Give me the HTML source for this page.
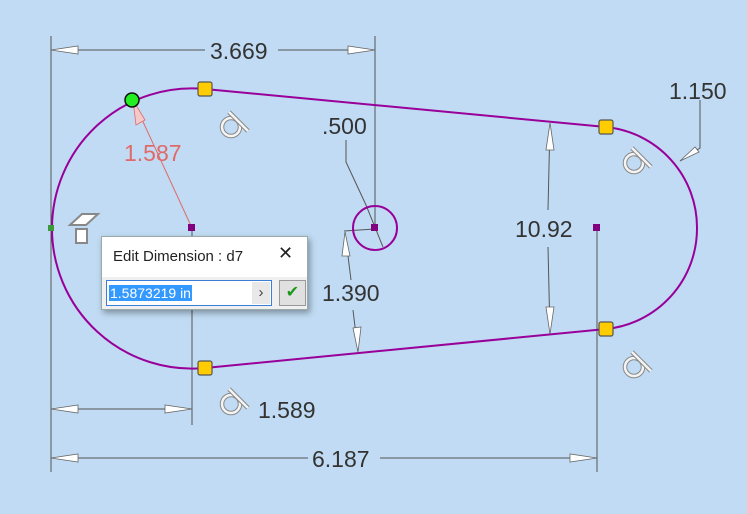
<!DOCTYPE html>
<html><head><style>
body{margin:0;width:747px;height:514px;overflow:hidden;background:#c0dbf3;font-family:"Liberation Sans",sans-serif}
svg{position:absolute;left:0;top:0}
.dlg{position:absolute;left:101px;top:236px;width:205px;height:72px;background:#fff;border:1px solid #9aa;box-shadow:2px 3px 6px rgba(0,0,0,.35)}
.ttl{position:absolute;left:11px;top:11px;font-size:15px;color:#222}
.x{position:absolute;left:176px;top:6px;font-size:18px;color:#222}
.bar{position:absolute;left:0;top:40px;width:205px;height:32px;background:#f0f0f0}
.inp{position:absolute;left:4px;top:43px;width:164px;height:24px;border:1px solid #3a7fd5;background:#fff}
.sel{position:absolute;left:2px;top:4px;background:#3399ff;color:#fff;font-size:14px;padding:0 1px;line-height:16px}
.gt{position:absolute;left:145px;top:1px;width:18px;height:22px;background:#e8e8e8;font-size:15px;color:#444;text-align:center;line-height:22px}
.ok{position:absolute;left:177px;top:43px;width:25px;height:24px;border:1px solid #999;background:#e0e0e0;color:#1a9a1a;font-size:16px;text-align:center;line-height:24px}
</style></head><body>
<svg width="747" height="514" viewBox="0 0 747 514">
<defs>
<g id="tg"><circle cx="0" cy="0" r="9" fill="none" stroke="#888" stroke-width="4.5"/><circle cx="0" cy="0" r="9" fill="none" stroke="#f4f4f4" stroke-width="2.5"/><line x1="-2" y1="-15" x2="17" y2="4" stroke="#888" stroke-width="4.5"/><line x1="-2" y1="-15" x2="17" y2="4" stroke="#f4f4f4" stroke-width="2.5"/></g>
</defs>
<g stroke="#555" stroke-width="1" fill="none">
<line x1="51" y1="36" x2="51" y2="472"/>
<line x1="375" y1="36" x2="375" y2="228"/>
<line x1="597" y1="228" x2="597" y2="472"/>
<line x1="192" y1="228" x2="192" y2="425"/>
<line x1="51" y1="50" x2="205" y2="50"/><line x1="278" y1="50" x2="375" y2="50"/>
<line x1="51" y1="458" x2="308" y2="458"/><line x1="380" y1="458" x2="597" y2="458"/>
<line x1="51" y1="409" x2="192" y2="409"/>
<line x1="550" y1="123" x2="548" y2="210"/><line x1="548" y1="247" x2="550" y2="334"/>
<line x1="344" y1="231" x2="375" y2="229"/>
<line x1="345" y1="232" x2="351" y2="280"/><line x1="353" y1="310" x2="358" y2="352"/>
<polyline points="346,140 346,162 366,205 383,247"/>
<polyline points="700,100 700,148 680,161"/>
</g>
<g fill="#fff" stroke="#666" stroke-width=".8">
<polygon points="51,50 78,46 78,54"/><polygon points="375,50 348,46 348,54"/>
<polygon points="51,458 78,454 78,462"/><polygon points="597,458 570,454 570,462"/>
<polygon points="51,409 78,405 78,413"/><polygon points="192,409 165,405 165,413"/>
<polygon points="550,123 546,150 554,150"/><polygon points="550,334 546,307 554,307"/>
<polygon points="345,232 342,256 350,256"/><polygon points="358,352 353,328 361,327"/>
<polygon points="680,161 695,147 699,152"/>
</g>
<line x1="192" y1="228" x2="133" y2="100" stroke="#e06a6a" stroke-width="1"/>
<polygon points="133,100 136,125 145,120" fill="#f3c9c9" stroke="#e06a6a" stroke-width=".8"/>
<g stroke="#990099" stroke-width="2" fill="none">
<path d="M205,89 A140,140 0 0 0 52,228 A140,140 0 0 0 205,368"/>
<line x1="205" y1="89" x2="606" y2="127"/>
<line x1="205" y1="368" x2="606" y2="329"/>
<path d="M606,127 A101,101 0 0 1 697,228 A101,101 0 0 1 606,329"/>
<circle cx="375" cy="228" r="22"/>
</g>
<g fill="#ffcc00" stroke="#555" stroke-width="1.2">
<rect x="198" y="82" width="14" height="14" rx="2"/><rect x="599" y="120" width="14" height="14" rx="2"/>
<rect x="599" y="322" width="14" height="14" rx="2"/><rect x="198" y="361" width="14" height="14" rx="2"/>
</g>
<circle cx="132" cy="100" r="7" fill="#22ee22" stroke="#111" stroke-width="1.5"/>
<rect x="188" y="224" width="7" height="7" fill="#800080"/>
<rect x="593" y="224" width="7" height="7" fill="#800080"/>
<rect x="371" y="224" width="7" height="7" fill="#800080"/>
<rect x="48" y="225" width="6" height="6" fill="#3a9a3a"/>
<use href="#tg" x="231" y="127"/><use href="#tg" x="634" y="163"/>
<use href="#tg" x="634" y="367"/><use href="#tg" x="231" y="404"/>
<g fill="#fff" stroke="#888" stroke-width="2"><polygon points="70,225 82,214 98,214 86,225"/><rect x="76" y="229" width="11" height="14"/></g>
<g font-family="Liberation Sans,sans-serif" font-size="23" fill="#333">
<text x="210" y="59">3.669</text>
<text x="312" y="467">6.187</text>
<text x="258" y="418">1.589</text>
<text x="515" y="237">10.92</text>
<text x="322" y="301">1.390</text>
<text x="322" y="134">.500</text>
<text x="669" y="99">1.150</text>
<text x="124" y="161" fill="#e06a6a">1.587</text>
</g>
</svg>
<div class="dlg"><div class="ttl">Edit Dimension : d7</div><div class="x">✕</div><div class="bar"></div>
<div class="inp"><span class="sel">1.5873219 in</span><div class="gt">›</div></div><div class="ok">✔</div></div>
</body></html>
